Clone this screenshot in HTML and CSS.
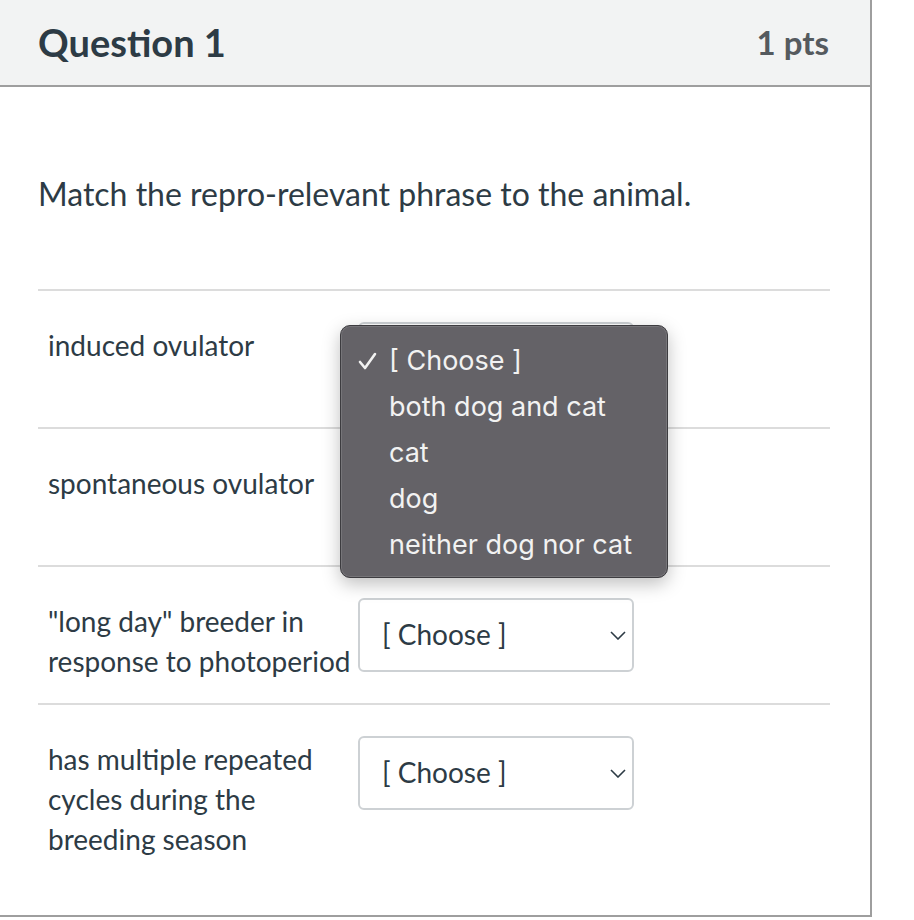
FILE: index.html
```html
<!DOCTYPE html>
<html lang="en">
<head>
<meta charset="utf-8">
<title>Question 1</title>
<link rel="stylesheet" href="styles.css">
</head>
<body>
<div class="card">
  <div class="header">
    <h2 class="title">Question 1</h2>
    <div class="pts">1 pts</div>
  </div>
  <div class="content">
    <p class="question">Match the repro-relevant phrase to the animal.</p>
    <div class="rows">
      <div class="row">
        <div class="label">induced ovulator</div>
        <div class="select-wrap">
          <div class="select"><span>[ Choose ]</span><svg class="chev" width="16" height="9" viewBox="0 0 16 9"><polyline points="1,1 8,8 15,1" fill="none" stroke="#2d3b45" stroke-width="1.6"/></svg></div>
          <div class="menu">
            <div class="item"><svg class="check" width="19" height="18" viewBox="0 0 19 18"><polyline points="2,10 7,16 17,2" fill="none" stroke="#f2f2f2" stroke-width="2.6" stroke-linecap="round" stroke-linejoin="round"/></svg>[ Choose ]</div>
            <div class="item">both dog and cat</div>
            <div class="item">cat</div>
            <div class="item">dog</div>
            <div class="item">neither dog nor cat</div>
          </div>
        </div>
      </div>
      <div class="row">
        <div class="label">spontaneous ovulator</div>
        <div class="select-wrap">
          <div class="select"><span>[ Choose ]</span><svg class="chev" width="16" height="9" viewBox="0 0 16 9"><polyline points="1,1 8,8 15,1" fill="none" stroke="#2d3b45" stroke-width="1.6"/></svg></div>
        </div>
      </div>
      <div class="row">
        <div class="label">"long day" breeder in response to photoperiod</div>
        <div class="select-wrap">
          <div class="select"><span>[ Choose ]</span><svg class="chev" width="16" height="9" viewBox="0 0 16 9"><polyline points="1,1 8,8 15,1" fill="none" stroke="#2d3b45" stroke-width="1.6"/></svg></div>
        </div>
      </div>
      <div class="row">
        <div class="label">has multiple repeated cycles during the breeding season</div>
        <div class="select-wrap">
          <div class="select"><span>[ Choose ]</span><svg class="chev" width="16" height="9" viewBox="0 0 16 9"><polyline points="1,1 8,8 15,1" fill="none" stroke="#2d3b45" stroke-width="1.6"/></svg></div>
        </div>
      </div>
    </div>
  </div>
</div>
</body>
</html>
```
FILE: styles.css
```css
html, body {
  margin: 0;
  padding: 0;
  background: #ffffff;
}
body {
  font-family: Lato, "Open Sans", sans-serif;
  color: #2d3b45;
}
.card {
  width: 870px;
  border-right: 2px solid #9e9e9e;
  border-bottom: 2px solid #9e9e9e;
  background: #fff;
}
.header {
  box-sizing: border-box;
  height: 87px;
  background: #f2f3f3;
  border-bottom: 2px solid #9e9e9e;
  display: flex;
  align-items: center;
  justify-content: space-between;
  padding: 0 41px 2px 38px;
}
.title {
  margin: 0;
  font-size: 38px;
  font-weight: 700;
  color: #2d3b45;
}
.pts {
  font-size: 33px;
  font-weight: 700;
  color: #555a5e;
}
.content {
  padding: 85px 40px 34px 38px;
}
.question {
  margin: 0 0 74px;
  font-size: 32px;
  line-height: 43px;
}
.row {
  border-top: 2px solid #dcdcdc;
  padding: 31px 0 22px 10px;
  display: flex;
  align-items: flex-start;
}
.label {
  width: 310px;
  font-size: 28px;
  line-height: 40px;
  padding-top: 3px;
}
.select-wrap {
  position: relative;
  padding-bottom: 9px;
}
.select {
  width: 276px;
  height: 74px;
  box-sizing: border-box;
  border: 2px solid #cdd1d4;
  border-radius: 6px;
  display: flex;
  align-items: center;
  justify-content: space-between;
  padding: 0 6px 2px 22px;
  font-size: 28px;
}
.chev {
  margin-top: 2px;
}
.menu {
  position: absolute;
  left: -18px;
  top: 3px;
  width: 328px;
  box-sizing: border-box;
  padding: 12px 0 9px;
  background: #646267;
  border: 1px solid #3d3c40;
  border-radius: 10px;
  box-shadow: inset 0 0 0 1px rgba(255,255,255,0.12), 0 6px 18px rgba(0,0,0,0.25);
  font-family: Inter, "Noto Sans", sans-serif;
  font-size: 27px;
  color: #f2f2f2;
  z-index: 2;
}
.item {
  position: relative;
  height: 46px;
  line-height: 46px;
  padding-left: 48px;
  white-space: nowrap;
}
.check {
  position: absolute;
  left: 17px;
  top: 14px;
}
```
